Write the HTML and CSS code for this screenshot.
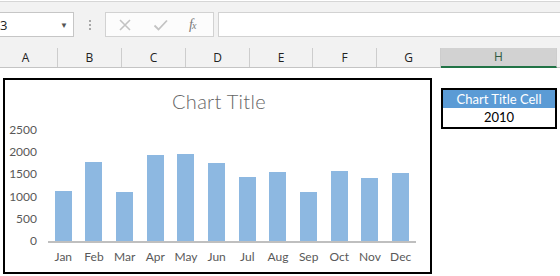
FILE: index.html
```html
<!DOCTYPE html>
<html lang="en">
<head>
    <meta charset="UTF-8">
    <title>Chart Title Cell</title>
    <link rel="stylesheet" href="styles.css">
</head>
<body>

    <!-- formula bar -->
    <div class="top">
        <div class="formula-row">
            <div class="name-box">
                <span class="name-text">3</span>
                <span class="drop">&#9660;</span>
            </div>
            <div class="dots"><i></i><i></i><i></i></div>
            <div class="fx-group">
                <svg class="ico" width="14" height="14" viewBox="0 0 14 14"><path d="M2 2 L12 12 M12 2 L2 12" stroke="#c3c3c3" stroke-width="1.6" fill="none"/></svg>
                <svg class="ico" width="16" height="14" viewBox="0 0 16 14"><path d="M1.5 7.5 L5.5 11.5 L14 2.5" stroke="#c3c3c3" stroke-width="1.8" fill="none"/></svg>
                <span class="fx">f<sub>x</sub></span>
            </div>
            <div class="formula-input"></div>
        </div>

        <!-- column headers -->
        <div class="col-heads">
            <div class="col w64">A</div>
            <div class="col w64">B</div>
            <div class="col w64">C</div>
            <div class="col w64">D</div>
            <div class="col w63">E</div>
            <div class="col w64">F</div>
            <div class="col w64">G</div>
            <div class="col wh selected">H</div>
            <div class="col rest"></div>
        </div>
    </div>

    <!-- sheet -->
    <div class="sheet">
        <div class="chart">
            <div class="chart-title">Chart Title</div>
            <div class="plot-row">
                <div class="y-axis">
                    <span>2500</span>
                    <span>2000</span>
                    <span>1500</span>
                    <span>1000</span>
                    <span>500</span>
                    <span>0</span>
                </div>
                <div class="plot">
                    <div class="bar" style="height: 50px"></div>
                    <div class="bar" style="height: 79px"></div>
                    <div class="bar" style="height: 49px"></div>
                    <div class="bar" style="height: 86px"></div>
                    <div class="bar" style="height: 87px"></div>
                    <div class="bar" style="height: 78px"></div>
                    <div class="bar" style="height: 64px"></div>
                    <div class="bar" style="height: 69px"></div>
                    <div class="bar" style="height: 49px"></div>
                    <div class="bar" style="height: 70px"></div>
                    <div class="bar" style="height: 63px"></div>
                    <div class="bar" style="height: 68px"></div>
                </div>
            </div>
            <div class="x-axis">
                <span>Jan</span><span>Feb</span><span>Mar</span><span>Apr</span>
                <span>May</span><span>Jun</span><span>Jul</span><span>Aug</span>
                <span>Sep</span><span>Oct</span><span>Nov</span><span>Dec</span>
            </div>
        </div>

        <div class="cell-box">
            <div class="cell-head">Chart Title Cell</div>
            <div class="cell-value">2010</div>
        </div>
    </div>

</body>
</html>
```
FILE: styles.css
```css
/* page */
body {
    margin: 0;
    background-color: #fff;
    font-family: Lato, "Open Sans", sans-serif;
    overflow: hidden;
}

/* formula bar area */
.top {
    background-color: #f2f2f2;
    border-top: 1px solid #d6d6d6;
    margin-top: 1px;
}

.formula-row {
    display: flex;
    align-items: center;
    height: 25px;
    padding-top: 10px;
}

.name-box {
    width: 74px;
    height: 25px;
    box-sizing: border-box;
    border: 1px solid #c6c6c6;
    border-left: none;
    background-color: #fff;
    display: flex;
    align-items: center;
    justify-content: space-between;
    overflow: hidden;
}

.name-text {
    font-family: "Open Sans", sans-serif;
    font-size: 13px;
    color: #222;
    margin-left: 0;
}

.drop {
    font-size: 8px;
    color: #555;
    margin-right: 5px;
}

.dots {
    width: 31px;
    display: flex;
    flex-direction: column;
    align-items: center;
    gap: 2px;
}

.dots i {
    width: 2px;
    height: 2px;
    background-color: #a8a8a8;
}

.fx-group {
    width: 109px;
    height: 25px;
    box-sizing: border-box;
    border: 1px solid #d2d2d2;
    background-color: #fcfcfc;
    display: flex;
    align-items: center;
    padding-left: 12px;
    gap: 21px;
}

.fx {
    font-family: "Liberation Serif", serif;
    font-style: italic;
    font-size: 14px;
    color: #7a7a7a;
    margin-left: -1px;
}

.fx sub {
    font-size: 10px;
    vertical-align: baseline;
    margin-left: -1px;
}

.formula-input {
    flex: 1;
    height: 25px;
    box-sizing: border-box;
    margin-left: 4px;
    border: 1px solid #d2d2d2;
    border-right: none;
    background-color: #fff;
}

/* column headers */
.col-heads {
    display: flex;
    margin-top: 11px;
    margin-left: -6px;
    height: 19px;
    border-bottom: 1px solid #c4c4c4;
}

.col {
    box-sizing: border-box;
    border-right: 1px solid #cdcdcd;
    font-family: "Open Sans", sans-serif;
    font-size: 12px;
    line-height: 19px;
    color: #222;
    text-align: center;
}

.w64 { width: 64px; }
.w63 { width: 63px; }
.wh { width: 116px; }
.rest { flex: 1; border-right: none; }

.col.selected {
    background-color: #d2d2d2;
    color: #2f5a41;
    border-bottom: 2px solid #217346;
    line-height: 18px;
    height: 20px;
}

/* sheet body */
.sheet {
    display: flex;
    align-items: flex-start;
    padding: 10px 0 0 3px;
}

.chart {
    width: 429px;
    height: 196px;
    box-sizing: border-box;
    border: 2px solid #000;
    padding-top: 10px;
    color: #595959;
}

.chart-title {
    font-size: 20px;
    font-weight: 300;
    letter-spacing: 0.3px;
    line-height: 22px;
    text-align: center;
    margin-left: 3px;
    color: #666;
}

.plot-row {
    display: flex;
    height: 125px;
    margin-top: 11px;
}

.y-axis {
    width: 35px;
    display: flex;
    flex-direction: column;
    justify-content: space-between;
    align-items: flex-end;
    padding-right: 3px;
    box-sizing: border-box;
    font-size: 12px;
    line-height: 14px;
}

.plot {
    margin-left: 8px;
    width: 368px;
    height: 118px;
    border-bottom: 2px solid #bfbfbf;
    display: grid;
    grid-template-columns: repeat(12, 1fr);
    align-items: end;
    justify-items: center;
}

.bar {
    width: 17px;
    background-color: #8db8e1;
}

.x-axis {
    display: grid;
    grid-template-columns: repeat(12, 1fr);
    width: 368px;
    margin: 2px 0 0 43px;
    font-size: 12px;
    line-height: 14px;
    text-align: center;
}

/* title cell */
.cell-box {
    width: 116px;
    margin: 10px 0 0 9px;
    border: 2px solid #000;
    box-sizing: border-box;
    font-size: 13px;
    text-align: center;
}

.cell-head {
    background-color: #5b9bd5;
    color: #fff;
    line-height: 18px;
}

.cell-value {
    color: #000;
    line-height: 19px;
}
```
